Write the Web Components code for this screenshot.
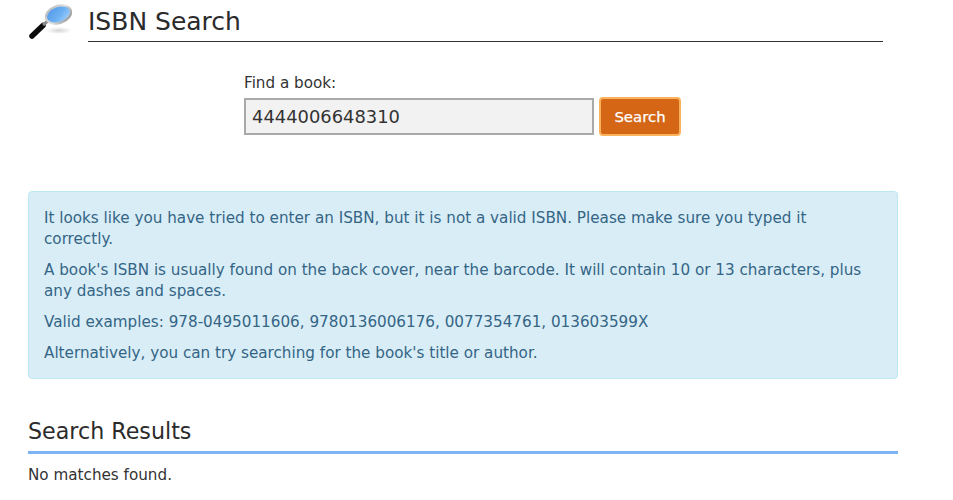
<!DOCTYPE html>
<html><head><meta charset="utf-8"><title>ISBN Search</title>
<style>
html,body{margin:0;padding:0;background:#fff;overflow:hidden}
body{font-family:"DejaVu Sans",sans-serif;font-size:15.2px;color:#333}
</style></head><body>
<isbn-page>
  <isbn-header slot="header">ISBN Search</isbn-header>
  <isbn-search slot="search" label="Find a book:" value="4444006648310" action="Search"></isbn-search>
  <isbn-alert slot="alert">
    <p>It looks like you have tried to enter an ISBN, but it is not a valid ISBN. Please make sure you typed it correctly.</p>
    <p>A book's ISBN is usually found on the back cover, near the barcode. It will contain 10 or 13 characters, plus any dashes and spaces.</p>
    <p>Valid examples: 978-0495011606, 9780136006176, 0077354761, 013603599X</p>
    <p>Alternatively, you can try searching for the book's title or author.</p>
  </isbn-alert>
  <isbn-results slot="results" heading="Search Results">No matches found.</isbn-results>
</isbn-page>
<script>
function def(name,html,init){
  customElements.define(name,class extends HTMLElement{
    constructor(){super();this.attachShadow({mode:'open'}).innerHTML=html;}
    connectedCallback(){if(init)init(this,this.shadowRoot);}
  });
}
def('isbn-page',`<style>
:host{display:block;width:870px;margin-left:28px}
</style>
<slot name="header"></slot><slot name="search"></slot><slot name="alert"></slot><slot name="results"></slot>`);
def('isbn-header',`<style>
:host{display:flex;width:855px;height:42px;box-sizing:border-box;align-items:stretch;gap:16px}
svg{width:44px;height:42px;flex:none;display:block}
h1{flex:1;margin:0;font:400 25px/43px "DejaVu Sans",sans-serif;color:#2b2b2b;height:42px;box-sizing:border-box;border-bottom:1px solid #333;}
</style>
<svg viewBox="0 0 44 42" aria-hidden="true">
<defs>
<linearGradient id="lens" x1="0" y1="0" x2="1" y2="1"><stop offset="0" stop-color="#4f93e6"/><stop offset=".55" stop-color="#6db1f3"/><stop offset="1" stop-color="#b4dbfa"/></linearGradient>
<linearGradient id="rim" x1="0" y1="0" x2="1" y2="1"><stop offset="0" stop-color="#b4b4b4"/><stop offset=".5" stop-color="#e0e0e0"/><stop offset="1" stop-color="#8a8a8a"/></linearGradient>
<radialGradient id="sh"><stop offset="0" stop-color="#d4d4d4"/><stop offset="1" stop-color="#fff"/></radialGradient>
<filter id="soft" x="-10%" y="-10%" width="120%" height="120%"><feGaussianBlur stdDeviation=".35"/></filter>
</defs>
<ellipse cx="31" cy="30.500" rx="13" ry="3.500" fill="url(#sh)"/>
<g filter="url(#soft)">
<path d="M4 36 L15 25.500" stroke="#0d0d0d" stroke-width="5.500" stroke-linecap="round"/>
<path d="M15 25 L21 20" stroke="#8a8a8a" stroke-width="3"/>
<ellipse cx="30.500" cy="14.500" rx="13" ry="8.500" transform="rotate(-20 30.500 14.500)" fill="url(#lens)" stroke="url(#rim)" stroke-width="2.200"/>
</g>
</svg>
<h1><slot></slot></h1>`);
def('isbn-search',`<style>
:host{display:block;margin:32px 0 0 216px}
label{display:block;font-size:15.2px;line-height:18px;color:#333;margin-bottom:5px}
.row{display:flex;align-items:center;gap:5px}
input{width:350px;height:37px;box-sizing:border-box;border:2px solid #a9a9a9;background:#f2f2f2;padding:0 6px;margin:0;font:17.9px "DejaVu Sans",sans-serif;color:#333;outline:none;border-radius:0}
button{width:82px;height:39px;box-sizing:border-box;border:2px solid #fbb45c;border-radius:4px;background:#d46616;color:#fff;font:14.9px "DejaVu Sans",sans-serif;margin:0;padding:0;-webkit-text-stroke:.25px #fff}
</style>
<label id="l"></label>
<div class="row"><input id="i" type="text"><button id="b" type="button"></button></div>`,(h,s)=>{
  s.getElementById('l').textContent=h.getAttribute('label');
  s.getElementById('i').value=h.getAttribute('value');
  s.getElementById('b').textContent=h.getAttribute('action');
});
def('isbn-alert',`<style>
:host{display:block;margin-top:55px;box-sizing:border-box;padding:16px 25px 14px 15px;background:#d9edf7;border:1px solid #bce8f1;border-radius:4px;color:#346585;line-height:21px}
::slotted(p){margin:0 0 10px}
::slotted(p:last-child){margin:0}
</style><slot></slot>`);
def('isbn-results',`<style>
:host{display:block;margin-top:36px}
h2{margin:0;font:400 22.2px/32px "DejaVu Sans",sans-serif;color:#2b2b2b;padding-bottom:4px;border-bottom:3px solid #7cb4f5}
div{margin-top:11px;line-height:20px;color:#333}
</style><h2 id="h"></h2><div><slot></slot></div>`,(h,s)=>{s.getElementById('h').textContent=h.getAttribute('heading');});
</script>
</body></html>
